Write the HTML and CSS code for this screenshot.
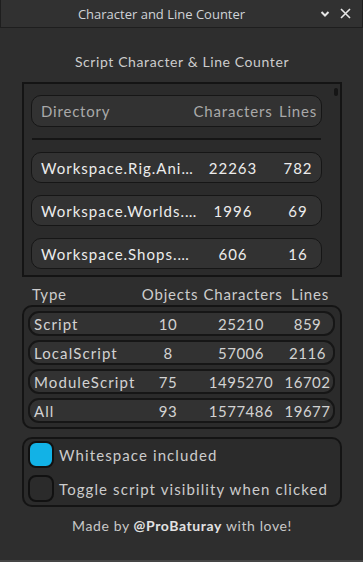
FILE: index.html
```html
<!DOCTYPE html>
<html>
<head>
<meta charset="utf-8">
<link rel="stylesheet" href="styles.css">
</head>
<body>
<div class="window">
  <div class="titlebar">
    <span class="title">Character and Line Counter</span>
    <div class="tb-icons">
      <svg class="chev" width="10" height="8" viewBox="0 0 10 8"><path d="M1.5 2 L5 5.5 L8.5 2" fill="none" stroke="#e6e6e6" stroke-width="2"/></svg>
      <svg class="close" width="11" height="11" viewBox="0 0 11 11"><path d="M1 1 L10 10 M10 1 L1 10" fill="none" stroke="#e6e6e6" stroke-width="1.6"/></svg>
    </div>
  </div>
  <div class="content">
    <div class="heading">Script Character &amp; Line Counter</div>
    <div class="frame">
      <div class="thumb"></div>
      <div class="pill head">
        <span class="c-name">Directory</span>
        <span class="c-chars">Characters</span>
        <span class="c-lines">Lines</span>
      </div>
      <div class="sep"></div>
      <div class="rows">
        <div class="pill item">
          <span class="c-name">Workspace.Rig.Ani…</span>
          <span class="c-chars">22263</span>
          <span class="c-lines">782</span>
        </div>
        <div class="pill item">
          <span class="c-name">Workspace.Worlds.…</span>
          <span class="c-chars">1996</span>
          <span class="c-lines">69</span>
        </div>
        <div class="pill item">
          <span class="c-name">Workspace.Shops.…</span>
          <span class="c-chars">606</span>
          <span class="c-lines">16</span>
        </div>
      </div>
    </div>
    <div class="type-head">
      <span class="t-name">Type</span>
      <span class="t-num">Objects</span>
      <span class="t-num">Characters</span>
      <span class="t-num">Lines</span>
    </div>
    <div class="type-box">
      <div class="trow"><span class="t-name">Script</span><span class="t-num">10</span><span class="t-num">25210</span><span class="t-num">859</span></div>
      <div class="trow"><span class="t-name">LocalScript</span><span class="t-num">8</span><span class="t-num">57006</span><span class="t-num">2116</span></div>
      <div class="trow"><span class="t-name">ModuleScript</span><span class="t-num">75</span><span class="t-num">1495270</span><span class="t-num">16702</span></div>
      <div class="trow"><span class="t-name">All</span><span class="t-num">93</span><span class="t-num">1577486</span><span class="t-num">19677</span></div>
    </div>
    <div class="options">
      <div class="opt"><span class="box on"></span><span class="label">Whitespace included</span></div>
      <div class="opt"><span class="box"></span><span class="label">Toggle script visibility when clicked</span></div>
    </div>
    <div class="footer">Made by <b>@ProBaturay</b> with love!</div>
  </div>
</div>
</body>
</html>
```
FILE: styles.css
```css
html, body {
  margin: 0;
  padding: 0;
  background: #2e2e2e;
}
.window {
  width: 363px;
  height: 562px;
  box-sizing: border-box;
  border-bottom: 2px solid #454545;
  font-family: Lato, "Open Sans", sans-serif;
  color: #cfcfcf;
  overflow: hidden;
}
.titlebar {
  height: 27px;
  background: #313131;
  border: 1px solid #1e1e1e;
  border-top: none;
  display: flex;
  align-items: center;
  justify-content: center;
  padding-right: 40px;
  position: relative;
}
.title {
  font-family: "Open Sans", sans-serif;
  font-size: 13px;
  color: #d0d3d8;
}
.tb-icons {
  position: absolute;
  right: 11px;
  top: 8px;
  display: flex;
  align-items: center;
  gap: 10px;
}
.chev { margin-top: 1px; }
.content {
  padding: 0 21px 0 22px;
}
.heading {
  margin-top: 24px;
  height: 20px;
  line-height: 20px;
  text-align: center;
  font-size: 14px;
  letter-spacing: 0.6px;
  color: #cccccc;
}
.frame {
  margin-top: 10px;
  height: 195px;
  box-sizing: border-box;
  border: 2px solid #141414;
  background: #2b2b2b;
  padding: 11px 18px 0 7px;
  position: relative;
  overflow: hidden;
}
.thumb {
  position: absolute;
  right: 2px;
  top: 4px;
  width: 4px;
  height: 8px;
  border-radius: 2px;
  background: #151515;
}
.pill {
  height: 32px;
  box-sizing: border-box;
  border: 1px solid #161616;
  border-radius: 10px;
  background: #323232;
  display: flex;
  align-items: center;
  padding-left: 9px;
  font-size: 15px;
  letter-spacing: 1px;
  white-space: nowrap;
}
.pill .c-name { flex: 1; min-width: 0; }
.pill .c-chars { width: 84px; text-align: center; }
.pill .c-lines { width: 46px; text-align: center; }
.head { color: #a9a9a9; letter-spacing: 0.8px; }
.sep {
  margin: 11px 1px 0 1px;
  height: 2px;
  background: #151515;
}
.rows {
  margin-top: 12px;
  display: flex;
  flex-direction: column;
  gap: 12px;
}
.item { height: 31px; color: #ececec; }
.type-head {
  margin-top: 7px;
  height: 20px;
  line-height: 20px;
  display: grid;
  grid-template-columns: 106px 64px 82px 52px;
  padding-left: 10px;
  font-size: 15px;
  letter-spacing: 0.8px;
  color: #cccccc;
}
.t-num { text-align: center; white-space: nowrap; }
.type-box {
  margin-top: 1px;
  border: 2px solid #141414;
  border-radius: 10px;
  background: #2b2b2b;
  padding: 4px 5px 4px 4px;
  display: flex;
  flex-direction: column;
  gap: 4px;
}
.trow {
  height: 25px;
  box-sizing: border-box;
  border: 2px solid #161616;
  border-radius: 11px;
  background: #323232;
  display: grid;
  grid-template-columns: 106px 64px 82px 1fr;
  align-items: center;
  font-size: 15px;
  letter-spacing: 0.5px;
  color: #d2d2d2;
}
.trow .t-name { padding-left: 4px; letter-spacing: 1.1px; white-space: nowrap; }
.options {
  margin-top: 8px;
  border: 2px solid #141414;
  border-radius: 10px;
  background: #2b2b2b;
  padding: 2px 4px 3px 4px;
  display: flex;
  flex-direction: column;
  gap: 7px;
}
.opt {
  display: flex;
  align-items: center;
  gap: 5px;
}
.box {
  width: 26px;
  height: 27px;
  box-sizing: border-box;
  border: 2px solid #111111;
  border-radius: 8px;
  background: #2b2b2b;
}
.box.on { background: #12b2e6; }
.label {
  font-size: 15px;
  letter-spacing: 1.1px;
  color: #cccccc;
  white-space: nowrap;
}
.footer {
  margin-top: 9px;
  height: 20px;
  line-height: 20px;
  text-align: center;
  font-size: 14px;
  letter-spacing: 0.6px;
  color: #c8c8c8;
}
.footer b { color: #e2e2e2; }
```
